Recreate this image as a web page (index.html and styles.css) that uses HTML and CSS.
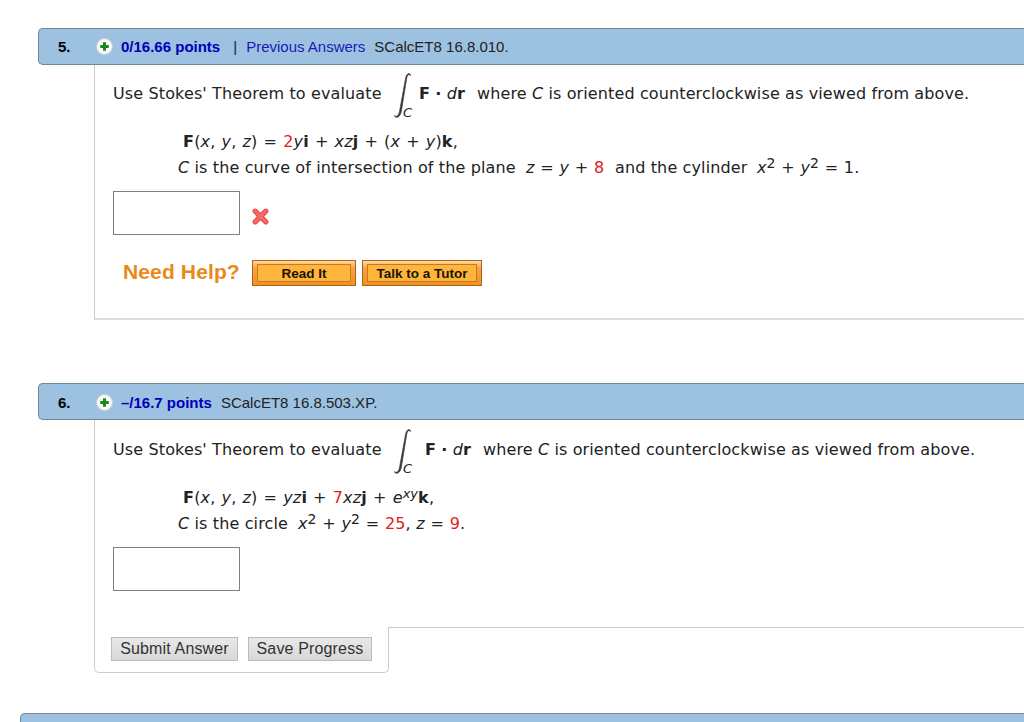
FILE: index.html
```
<!DOCTYPE html>
<html lang="en">

<head>
    <meta charset="UTF-8">
    <meta name="viewport" content="width=device-width, initial-scale=1.0">
    <title>Stokes' Theorem Homework</title>
    <link rel="stylesheet" href="styles.css">
</head>

<body>
    <div class="question">
        <div class="question-header">
            <span class="number">5.</span>
            <svg class="plus" viewBox="0 0 16 16">
                <circle cx="8" cy="8" r="7.5" fill="#fafafa" stroke="#c9cfd3"/>
                <path d="M8 4v8M4 8h8" stroke="#178a17" stroke-width="2.8"/>
            </svg>
            <a class="points">0/16.66 points</a>
            <span class="divider">|</span>
            <a class="previous">Previous Answers</a>
            <span class="source">SCalcET8 16.8.010.</span>
        </div>
        <div class="question-body">
            <div class="prompt">
                <span class="intro">Use Stokes' Theorem to evaluate</span>
                <span class="integral">
                    <svg width="20" height="46" viewBox="0 0 20 46">
                        <path d="M17.6 3.4C17.4.8 13.8.4 12.6 6L6.6 39C5.8 43.4 3.6 45.6 1.6 43.6L1.8 44.6C3.8 46.4 7.4 45 8.4 39L13.6 7C14.2 3 15.6 1.6 17.6 3.4Z" fill="#333" stroke="#444" stroke-width=".7"/>
                    </svg>
                    <i>C</i>
                </span>
                <span class="integrand"><b>F</b> <b>·</b> <i>d</i><b>r</b></span>
                <span class="where">where <i>C</i> is oriented counterclockwise as viewed from above.</span>
            </div>
            <div class="field"><b>F</b>(<i>x</i>, <i>y</i>, <i>z</i>) = <em>2</em><i>y</i><b>i</b> + <i>xz</i><b>j</b> + (<i>x</i> + <i>y</i>)<b>k</b>,</div>
            <div class="curve"><span class="curve-plane"><i>C</i> is the curve of intersection of the plane</span><span class="curve-eq"><i>z</i> = <i>y</i> + <em>8</em></span><span class="curve-cyl">and the cylinder</span><span class="equation"><i>x</i><sup>2</sup> + <i>y</i><sup>2</sup> = 1.</span></div>
            <div class="answer">
                <input type="text">
                <svg class="wrong" viewBox="0 0 18 18">
                    <path d="M4 4l10 10M14 4L4 14" stroke="#e9484c" stroke-width="5" stroke-linecap="round"/>
                    <path d="M4 4l10 10M14 4L4 14" stroke="#f7686a" stroke-width="3" stroke-linecap="round"/>
                </svg>
            </div>
            <div class="help">
                <span class="help-label">Need Help?</span>
                <button class="help-button read"><span>Read It</span></button>
                <button class="help-button tutor"><span>Talk to a Tutor</span></button>
            </div>
        </div>
    </div>

    <div class="question">
        <div class="question-header">
            <span class="number">6.</span>
            <svg class="plus" viewBox="0 0 16 16">
                <circle cx="8" cy="8" r="7.5" fill="#fafafa" stroke="#c9cfd3"/>
                <path d="M8 4v8M4 8h8" stroke="#178a17" stroke-width="2.8"/>
            </svg>
            <a class="points">–/16.7 points</a>
            <span class="source">SCalcET8 16.8.503.XP.</span>
        </div>
        <div class="question-body open">
            <div class="prompt wide">
                <span class="intro">Use Stokes' Theorem to evaluate</span>
                <span class="integral">
                    <svg width="20" height="46" viewBox="0 0 20 46">
                        <path d="M17.6 3.4C17.4.8 13.8.4 12.6 6L6.6 39C5.8 43.4 3.6 45.6 1.6 43.6L1.8 44.6C3.8 46.4 7.4 45 8.4 39L13.6 7C14.2 3 15.6 1.6 17.6 3.4Z" fill="#333" stroke="#444" stroke-width=".7"/>
                    </svg>
                    <i>C</i>
                </span>
                <span class="integrand"><b>F</b> <b>·</b> <i>d</i><b>r</b></span>
                <span class="where">where <i>C</i> is oriented counterclockwise as viewed from above.</span>
            </div>
            <div class="field"><b>F</b>(<i>x</i>, <i>y</i>, <i>z</i>) = <i>yz</i><b>i</b> + <em>7</em><i>xz</i><b>j</b> + <i>e</i><sup><i>xy</i></sup><b>k</b>,</div>
            <div class="curve"><span class="curve-circle"><i>C</i> is the circle</span><span class="equation"><i>x</i><sup>2</sup> + <i>y</i><sup>2</sup> = <em>25</em>, <i>z</i> = <em>9</em>.</span></div>
            <div class="answer">
                <input type="text">
            </div>
        </div>
        <div class="question-footer">
            <div class="actions">
                <button>Submit Answer</button>
                <button>Save Progress</button>
            </div>
            <div class="footer-line"></div>
        </div>
    </div>

    <div class="next-section"></div>
</body>

</html>
```
FILE: styles.css
```
* {
    box-sizing: border-box;
}

body {
    margin: 0;
    padding-top: 28px;
    height: 722px;
    overflow: hidden;
    background: #fff;
    color: #222;
    font-family: Verdana, "DejaVu Sans", sans-serif;
    font-size: 16px;
}

.question {
    margin-left: 38px;
}

.question-header {
    display: flex;
    align-items: center;
    height: 37px;
    padding-left: 19px;
    border: 1px solid #6f8796;
    border-right: none;
    border-radius: 5px 0 0 5px;
    background: #9dc1e0;
    font-family: Arial, "Liberation Sans", sans-serif;
    font-size: 15px;
    white-space: nowrap;
}

.number {
    width: 38px;
    color: #000;
    font-weight: bold;
}

.plus {
    width: 17px;
    height: 17px;
    margin-right: 8px;
}

.points {
    color: #0000b8;
    font-weight: bold;
}

.divider {
    margin: 0 9px 0 13px;
}

.previous {
    color: #1a1ab5;
}

.source {
    margin-left: 9px;
}

.question-body {
    height: 255px;
    margin-left: 56px;
    padding: 6px 0 0 18px;
    border-left: 1px solid #ccc;
    border-bottom: 2px solid #ddd;
    letter-spacing: 0.13px;
    white-space: nowrap;
}

.question + .question {
    margin-top: 63px;
}

.question + .question .question-header {
    padding-top: 1px;
}

.question-body.open {
    height: 207px;
    padding-top: 7px;
    border-bottom: none;
}

.prompt {
    display: flex;
    height: 50px;
    line-height: 46px;
}

.intro {
    width: 280px;
}

.integral {
    display: flex;
    width: 26px;
    height: 50px;
    padding-top: 1px;
}

.integral svg {
    flex-shrink: 0;
}

.integral i {
    margin-left: -10px;
    padding-top: 31px;
    font-size: 13px;
    line-height: 20px;
}

.integrand {
    width: 58px;
}

.where {
    letter-spacing: 0.12px;
}

.wide .integral {
    width: 32px;
}

.field {
    height: 26px;
    padding-left: 70px;
    line-height: 41px;
    letter-spacing: 0.2px;
    word-spacing: 0.7px;
}

.curve {
    display: flex;
    height: 26px;
    padding-left: 65px;
    line-height: 41px;
}

.curve-plane {
    width: 348px;
}

.curve-eq {
    width: 89px;
    word-spacing: 0.5px;
}

.curve-cyl {
    width: 142px;
}

.curve-circle {
    width: 120px;
}

.equation {
    word-spacing: 0.4px;
}

i {
    font-style: italic;
}

em {
    color: #e02020;
    font-style: normal;
}

sup {
    font-size: 14px;
    line-height: 0;
    vertical-align: 5px;
}

.field sup {
    font-size: 13px;
    letter-spacing: 0;
}

.answer {
    display: flex;
    align-items: center;
    margin-top: 18px;
}

.answer input {
    width: 127px;
    height: 44px;
    border: 1px solid #808080;
    background: #fff;
}

.wrong {
    width: 19px;
    height: 19px;
    margin: 7px 0 0 11px;
}

.help {
    display: flex;
    align-items: center;
    height: 27px;
    margin-top: 24px;
    padding-left: 10px;
}

.help-label {
    width: 129px;
    padding-bottom: 2px;
    color: #e88a1a;
    font-family: Arial, "Liberation Sans", sans-serif;
    font-size: 21px;
    font-weight: bold;
}

.help-button {
    height: 26px;
    padding: 3px 4px;
    border: 1px solid #a9651a;
    background: linear-gradient(#ffd9a0, #f9a040 30%, #f39224);
    color: #1c1200;
    font-family: Arial, "Liberation Sans", sans-serif;
    font-size: 13.5px;
    font-weight: bold;
}

.help-button span {
    display: block;
    height: 18px;
    border: 1px solid #c47a20;
    background: #ffb53c;
    line-height: 17px;
}

.read {
    width: 104px;
    margin-right: 6px;
}

.tutor {
    width: 120px;
}

.question-footer {
    display: flex;
    margin-left: 56px;
}

.actions {
    display: flex;
    gap: 10px;
    width: 295px;
    height: 46px;
    padding: 10px 0 0 16px;
    border: 1px solid #ccc;
    border-top: none;
    border-radius: 0 0 5px 5px;
}

.actions button {
    width: 127px;
    height: 24px;
    padding: 0;
    border: 1px solid #bbb;
    background: linear-gradient(#e8e8e8, #d9d9d9);
    color: #333;
    font-family: Arial, "Liberation Sans", sans-serif;
    font-size: 16px;
    letter-spacing: 0.15px;
}

.actions button + button {
    width: 124px;
}

.footer-line {
    flex: 1;
    border-top: 1px solid #ccc;
}

.next-section {
    height: 37px;
    margin: 40px 0 0 20px;
    border: 1px solid #6f8796;
    border-right: none;
    border-radius: 5px 0 0 5px;
    background: #9dc1e0;
}
```
